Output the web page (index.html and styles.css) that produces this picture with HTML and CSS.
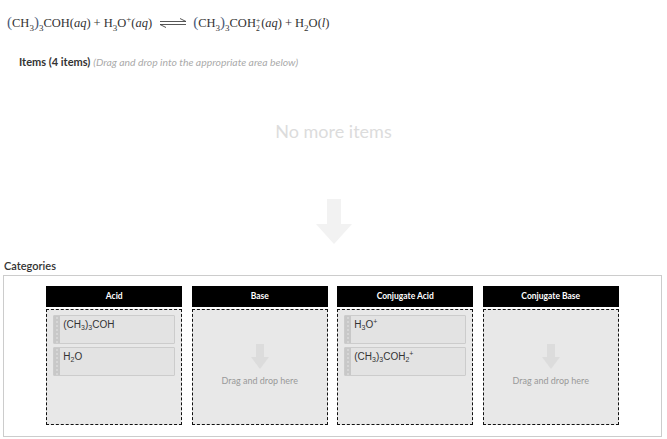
FILE: index.html
```html
<!DOCTYPE html>
<html>
<head>
<meta charset="utf-8">
<link rel="stylesheet" href="styles.css">
</head>
<body>
<div class="page">
  <div class="equation">
    <span class="par">(</span>CH<sub>3</sub><span class="par">)</span><sub>3</sub>COH(<i>aq</i>)<span class="op">+</span>H<sub>3</sub>O<sup>+</sup>(<i>aq</i>)<svg class="eqarrow" width="28" height="10" viewBox="0 0 28 10"><path d="M1 3.5 H27 M27 3.5 L21 0.5" stroke="#444" stroke-width="0.9" fill="none"/><path d="M1 6.5 H27 M1 6.5 L7 9.5" stroke="#444" stroke-width="0.9" fill="none"/></svg><span class="par">(</span>CH<sub>3</sub><span class="par">)</span><sub>3</sub>COH<span class="supsub"><span class="ss">+</span><span class="ss">2</span></span>(<i>aq</i>)<span class="op">+</span>H<sub>2</sub>O(<i>l</i>)
  </div>

  <div class="items-label"><b>Items (4 items)</b> <i>(Drag and drop into the appropriate area below)</i></div>

  <div class="nomore">No more items</div>

  <div class="bigarrow">
    <svg width="36" height="45" viewBox="0 0 36 45"><path d="M11 0 H25 V25 H36 L18 45 L0 25 H11 Z" fill="#f2f2f2"/></svg>
  </div>

  <div class="cat-label">Categories</div>
  <div class="cat-box">
    <div class="cols">
      <div class="col">
        <div class="col-head">Acid</div>
        <div class="zone">
          <div class="card"><span class="grip"></span><span class="ctext">(CH<sub>3</sub>)<sub>3</sub>COH</span></div>
          <div class="card"><span class="grip"></span><span class="ctext">H<sub>2</sub>O</span></div>
        </div>
      </div>
      <div class="col">
        <div class="col-head">Base</div>
        <div class="zone empty">
          <svg width="18" height="25" viewBox="0 0 18 25"><path d="M5 0 H13 V13 H18 L9 25 L0 13 H5 Z" fill="#dcdcdc"/></svg>
          <div class="hint">Drag and drop here</div>
        </div>
      </div>
      <div class="col">
        <div class="col-head">Conjugate Acid</div>
        <div class="zone">
          <div class="card"><span class="grip"></span><span class="ctext">H<sub>3</sub>O<sup>+</sup></span></div>
          <div class="card"><span class="grip"></span><span class="ctext">(CH<sub>3</sub>)<sub>3</sub>COH<sub>2</sub><sup>+</sup></span></div>
        </div>
      </div>
      <div class="col">
        <div class="col-head">Conjugate Base</div>
        <div class="zone empty">
          <svg width="18" height="25" viewBox="0 0 18 25"><path d="M5 0 H13 V13 H18 L9 25 L0 13 H5 Z" fill="#dcdcdc"/></svg>
          <div class="hint">Drag and drop here</div>
        </div>
      </div>
    </div>
  </div>
</div>
</body>
</html>
```

FILE: styles.css
```css
html, body {
  margin: 0;
  padding: 0;
  background: #fff;
}
.page {
  width: 667px;
  font-family: Lato, "Open Sans", sans-serif;
}
.equation {
  font-family: "Liberation Serif", "Times New Roman", serif;
  font-size: 12.5px;
  line-height: 23px;
  color: #333;
  padding: 11px 0 0 7px;
  height: 23px;
  white-space: nowrap;
}
.equation sub, .equation sup {
  font-size: 9px;
  line-height: 0;
}
.equation sub { vertical-align: -4px; }
.equation sup { vertical-align: 5px; }
.equation i { font-style: italic; }
.equation .par {
  font-size: 15px;
  color: #4a5a7a;
}
.equation .op { margin: 0 3px; }
.eqarrow {
  margin: 0 6px 0 7px;
  vertical-align: -1px;
}
.supsub {
  display: inline-block;
  font-size: 7.5px;
  line-height: 8px;
  vertical-align: -4px;
  margin-right: 1px;
}
.supsub .ss {
  display: block;
  height: 8px;
}
.items-label {
  margin: 21px 0 0 19px;
  font-size: 11px;
  color: #333;
  height: 14px;
}
.items-label b { font-weight: 700; }
.items-label i {
  color: #aaa;
  font-size: 10.4px;
}
.nomore {
  text-align: center;
  font-size: 18px;
  color: #dcdcdc;
  margin-top: 51px;
  height: 22px;
}
.bigarrow {
  display: flex;
  justify-content: center;
  margin-top: 57px;
  height: 45px;
}
.cat-label {
  margin: 15px 0 0 4px;
  font-size: 11px;
  font-weight: 600;
  color: #333;
  height: 13px;
}
.cat-box {
  margin: 3px 0 0 3px;
  width: 659px;
  height: 162px;
  border: 1px solid #ccc;
  box-sizing: border-box;
  padding-top: 10px;
}
.cols {
  display: flex;
  justify-content: center;
  gap: 9.5px;
}
.col {
  width: 136px;
}
.col-head {
  background: #000;
  color: #fff;
  font-size: 8.5px;
  font-weight: 700;
  text-align: center;
  height: 21px;
  line-height: 21px;
}
.zone {
  margin-top: 2px;
  height: 116px;
  box-sizing: border-box;
  border: 1px dashed #111;
  background: #e8e8e8;
  padding: 5px 6px 0 6px;
  display: flex;
  flex-direction: column;
  gap: 3px;
}
.zone.empty {
  align-items: center;
  justify-content: flex-start;
  padding-top: 34px;
  gap: 6px;
}
.hint {
  font-size: 9px;
  color: #999;
}
.card {
  height: 29px;
  box-sizing: border-box;
  border: 1px solid #ccc;
  background: #e3e3e3;
  display: flex;
  border-radius: 1px;
}
.grip {
  width: 6px;
  background-color: #c8c8c8;
  background-image: radial-gradient(circle, #d6d6d6 1px, transparent 1.2px);
  background-size: 6px 4px;
}
.ctext {
  font-family: "Liberation Sans", Arial, sans-serif;
  font-size: 10px;
  color: #333;
  padding: 3px 0 0 3px;
}
.ctext sub, .ctext sup {
  font-size: 7px;
  line-height: 0;
}
.ctext sub { vertical-align: -2px; }
.ctext sup { vertical-align: 4px; }
```
